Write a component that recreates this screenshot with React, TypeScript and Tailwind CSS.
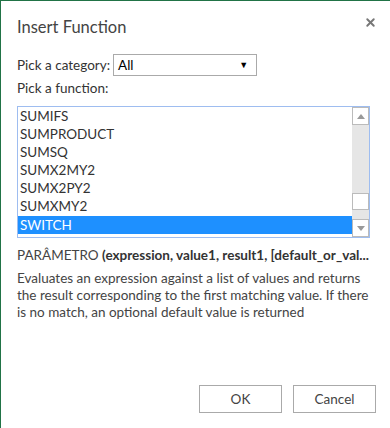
import { X } from 'lucide-react';

const FUNCS = ['SUMIFS', 'SUMPRODUCT', 'SUMSQ', 'SUMX2MY2', 'SUMX2PY2', 'SUMXMY2', 'SWITCH'];

export default function App() {
  return (
    <div
      className="w-[390px] h-[428px] bg-white border-l border-t border-[#217346] flex flex-col text-[#333]"
      style={{ fontFamily: '"Segoe UI", Lato, "Open Sans", sans-serif' }}
    >
      {/* header */}
      <div className="flex items-start justify-between pl-4 pr-3 pt-[14px] h-[46px]">
        <h1 className="text-[16.5px] leading-[24px] text-[#444]">Insert Function</h1>
        <X size={13} strokeWidth={3.5} className="text-[#777] mt-[1px] mr-[1px]" />
      </div>

      <div className="pl-4 pr-5 text-[13.5px]">
        <div className="flex items-center gap-[3px] h-[22px] mt-[7px]">
          <span>Pick a category:</span>
          <div className="w-[144px] h-[22px] border border-[#aaa] flex items-center justify-between pl-[4px] pr-[8px] text-[#000]">
            <span>All</span>
            <span className="text-[9px]">▼</span>
          </div>
        </div>
        <div className="mt-[2px] leading-[20px]">Pick a function:</div>

        {/* list box */}
        <div className="mt-[8px] w-[353px] h-[132px] border border-[#9ebdf0] flex">
          <div className="flex-1">
            {FUNCS.map(f => (
              <div
                key={f}
                className={`h-[18px] leading-[18px] pl-[2px] ${f === 'SWITCH' ? 'bg-[#1e90ff] text-white mt-[1px]' : ''}`}
              >
                {f}
              </div>
            ))}
          </div>
          <div className="w-[17px] bg-[#e6e6e6] flex flex-col">
            <div className="h-[18px] bg-white border border-[#bbb] flex items-center justify-center">
              <svg width="8" height="5" viewBox="0 0 8 5"><path d="M0 5 L4 0 L8 5 Z" fill="#999" /></svg>
            </div>
            <div className="flex-1 flex flex-col justify-end">
              <div className="h-[17px] bg-white border border-[#bbb] mb-[9px]" />
            </div>
            <div className="h-[18px] bg-white border border-[#bbb] flex items-center justify-center">
              <svg width="8" height="5" viewBox="0 0 8 5"><path d="M0 0 L8 0 L4 5 Z" fill="#999" /></svg>
            </div>
          </div>
        </div>

        {/* description */}
        <div className="mt-[7px] whitespace-nowrap text-[#444]">
          PARÂMETRO <b className="text-[#333]">(expression, value1, result1, [default_or_val...</b>
        </div>
        <p className="mt-[5px] leading-[17px] text-[#444]">
          Evaluates an expression against a list of values and returns the result corresponding to the first matching value. If there is no match, an optional default value is returned
        </p>
      </div>

      <div className="flex-1" />
      <div className="flex justify-end gap-[11px] pr-[14px] pb-[15px]">
        <button className="w-[83px] h-[28px] border border-[#aaa] text-[13.5px] text-[#444]">OK</button>
        <button className="w-[83px] h-[28px] border border-[#aaa] text-[13.5px] text-[#444]">Cancel</button>
      </div>
    </div>
  );
}
